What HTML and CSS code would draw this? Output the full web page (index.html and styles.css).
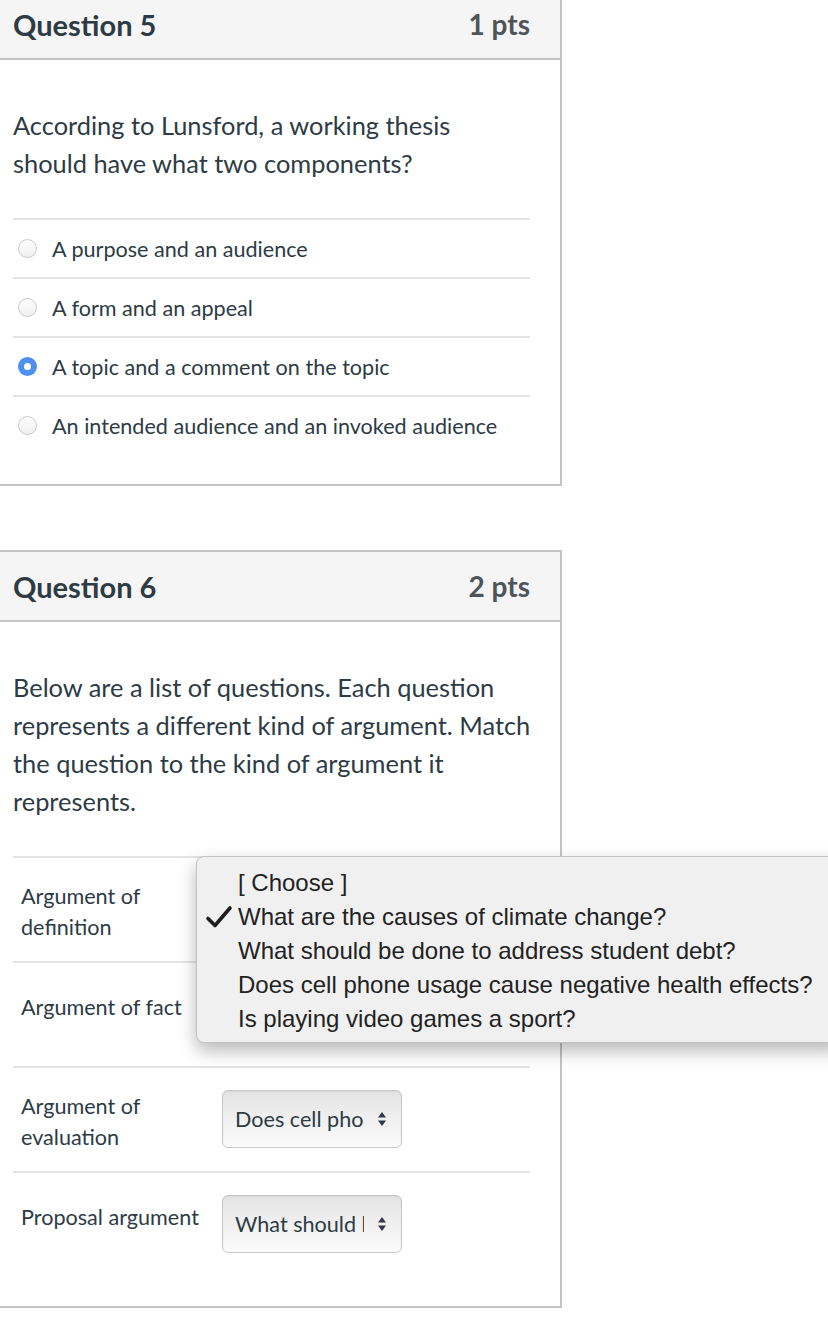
FILE: index.html
```html
<!DOCTYPE html>
<html lang="en">
<head>
  <meta charset="UTF-8">
  <meta name="viewport" content="width=device-width, initial-scale=1.0">
  <title>Quiz</title>
  <link rel="stylesheet" href="styles.css">
</head>
<body>
  <div class="quiz">
    <div class="question-card first">
      <div class="card-header">
        <span class="question-name">Question 5</span>
        <span class="question-points">1 pts</span>
      </div>
      <div class="card-body">
        <p class="question-text narrow">According to Lunsford, a working thesis should have what two components?</p>
        <div class="answers">
          <label class="answer"><span class="radio"></span>A purpose and an audience</label>
          <label class="answer"><span class="radio"></span>A form and an appeal</label>
          <label class="answer"><span class="radio checked"></span>A topic and a comment on the topic</label>
          <label class="answer"><span class="radio"></span>An intended audience and an invoked audience</label>
        </div>
      </div>
    </div>

    <div class="question-card">
      <div class="card-header">
        <span class="question-name">Question 6</span>
        <span class="question-points">2 pts</span>
      </div>
      <div class="card-body">
        <p class="question-text">Below are a list of questions. Each question represents a different kind of argument. Match the question to the kind of argument it represents.</p>
        <div class="matches">
          <div class="match-row">
            <div class="match-label">Argument of definition</div>
            <div class="select-box"></div>
            <div class="dropdown">
              <div class="option">[ Choose ]</div>
              <div class="option selected">
                <svg class="check" width="28" height="24" viewBox="0 0 28 24"><path d="M3 13.5 L10 20.5 L25 3" fill="none" stroke="#1e1e1e" stroke-width="3.6" stroke-linecap="round" stroke-linejoin="round"/></svg>What are the causes of climate change?
              </div>
              <div class="option">What should be done to address student debt?</div>
              <div class="option">Does cell phone usage cause negative health effects?</div>
              <div class="option">Is playing video games a sport?</div>
            </div>
          </div>
          <div class="match-row">
            <div class="match-label single">Argument of fact</div>
            <div class="select-box"></div>
          </div>
          <div class="match-row">
            <div class="match-label">Argument of evaluation</div>
            <div class="select-box"><span class="select-value">Does cell phone usage cause negative health effects?</span><svg class="select-arrows" width="10" height="16" viewBox="0 0 10 16"><path d="M5 1 L9 6.5 H1 Z M5 15 L9 9.5 H1 Z" fill="#2d3b45"/></svg></div>
          </div>
          <div class="match-row">
            <div class="match-label single">Proposal argument</div>
            <div class="select-box"><span class="select-value">What should be done to address student debt?</span><svg class="select-arrows" width="10" height="16" viewBox="0 0 10 16"><path d="M5 1 L9 6.5 H1 Z M5 15 L9 9.5 H1 Z" fill="#2d3b45"/></svg></div>
          </div>
        </div>
      </div>
    </div>
  </div>
</body>
</html>
```

FILE: styles.css
```css
html, body {
  margin: 0;
  padding: 0;
  background: #fff;
  overflow: hidden;
}

body {
  font-family: Lato, "Open Sans", sans-serif;
  color: #2d3b45;
}

.quiz {
  width: 562px;
}

.question-card {
  box-sizing: border-box;
  width: 562px;
  border: 2px solid #c4c4c4;
  border-left: 0;
  margin-bottom: 64px;
}

.question-card.first {
  margin-top: -12px;
}

.card-header {
  display: flex;
  justify-content: space-between;
  align-items: center;
  height: 68px;
  padding: 0 30px 0 13px;
  background: #f5f5f5;
  border-bottom: 2px solid #c4c4c4;
}

.question-name {
  font-size: 29px;
  font-weight: bold;
  color: #2d3b45;
}

.question-points {
  font-size: 28px;
  font-weight: bold;
  color: #4d555b;
}

.card-body {
  padding: 46px 30px 30px 13px;
}

.question-text {
  margin: 0 -1px 36px 0;
  font-size: 25.4px;
  line-height: 38px;
}

.question-text.narrow {
  max-width: 480px;
}

/* multiple choice */
.answer {
  display: flex;
  align-items: center;
  height: 57px;
  border-top: 2px solid #e4e4e4;
  font-size: 21.6px;
  padding-left: 5px;
}

.radio {
  box-sizing: border-box;
  flex: none;
  width: 19px;
  height: 19px;
  border-radius: 50%;
  border: 1px solid #c9c9c9;
  background: linear-gradient(#fdfdfd, #f0f0f0);
  margin-right: 15px;
  position: relative;
}

.radio.checked {
  border: 0;
  background: #4d90f0;
}

.radio.checked::after {
  content: "";
  position: absolute;
  left: 6px;
  top: 6px;
  width: 7px;
  height: 7px;
  border-radius: 50%;
  background: #fff;
}

/* matching */
.match-row {
  position: relative;
  display: flex;
  align-items: flex-start;
  height: 103px;
  border-top: 2px solid #e4e4e4;
}

.match-label {
  box-sizing: border-box;
  width: 209px;
  padding: 23px 16px 0 8px;
  font-size: 21.6px;
  line-height: 31px;
}

.match-label.single {
  padding-top: 29px;
}

.select-box {
  box-sizing: border-box;
  display: flex;
  align-items: center;
  width: 180px;
  height: 58px;
  padding: 0 12px;
  margin-top: 22px;
  border: 1px solid #c8c8c8;
  border-radius: 6px;
  background: linear-gradient(#e4e4e4, #fbfbfb);
  box-shadow: inset 0 1px 2px rgba(0, 0, 0, 0.06);
}

.select-value {
  width: 129px;
  overflow: hidden;
  white-space: nowrap;
  font-size: 21.6px;
}

.select-arrows {
  margin-left: auto;
  margin-right: 2px;
}

.dropdown {
  position: absolute;
  left: 183px;
  top: -2px;
  width: 650px;
  box-sizing: border-box;
  padding: 9px 0 6px 41px;
  background: #f0f0f0;
  border: 1px solid #c2c2c2;
  border-radius: 8px;
  box-shadow: 0 8px 18px rgba(0, 0, 0, 0.28);
  font-family: "Liberation Sans", Arial, sans-serif;
  font-size: 24px;
  line-height: 34px;
  color: #222;
  z-index: 2;
}

.option {
  position: relative;
  white-space: nowrap;
}

.check {
  position: absolute;
  left: -33px;
  top: 5px;
}
```
